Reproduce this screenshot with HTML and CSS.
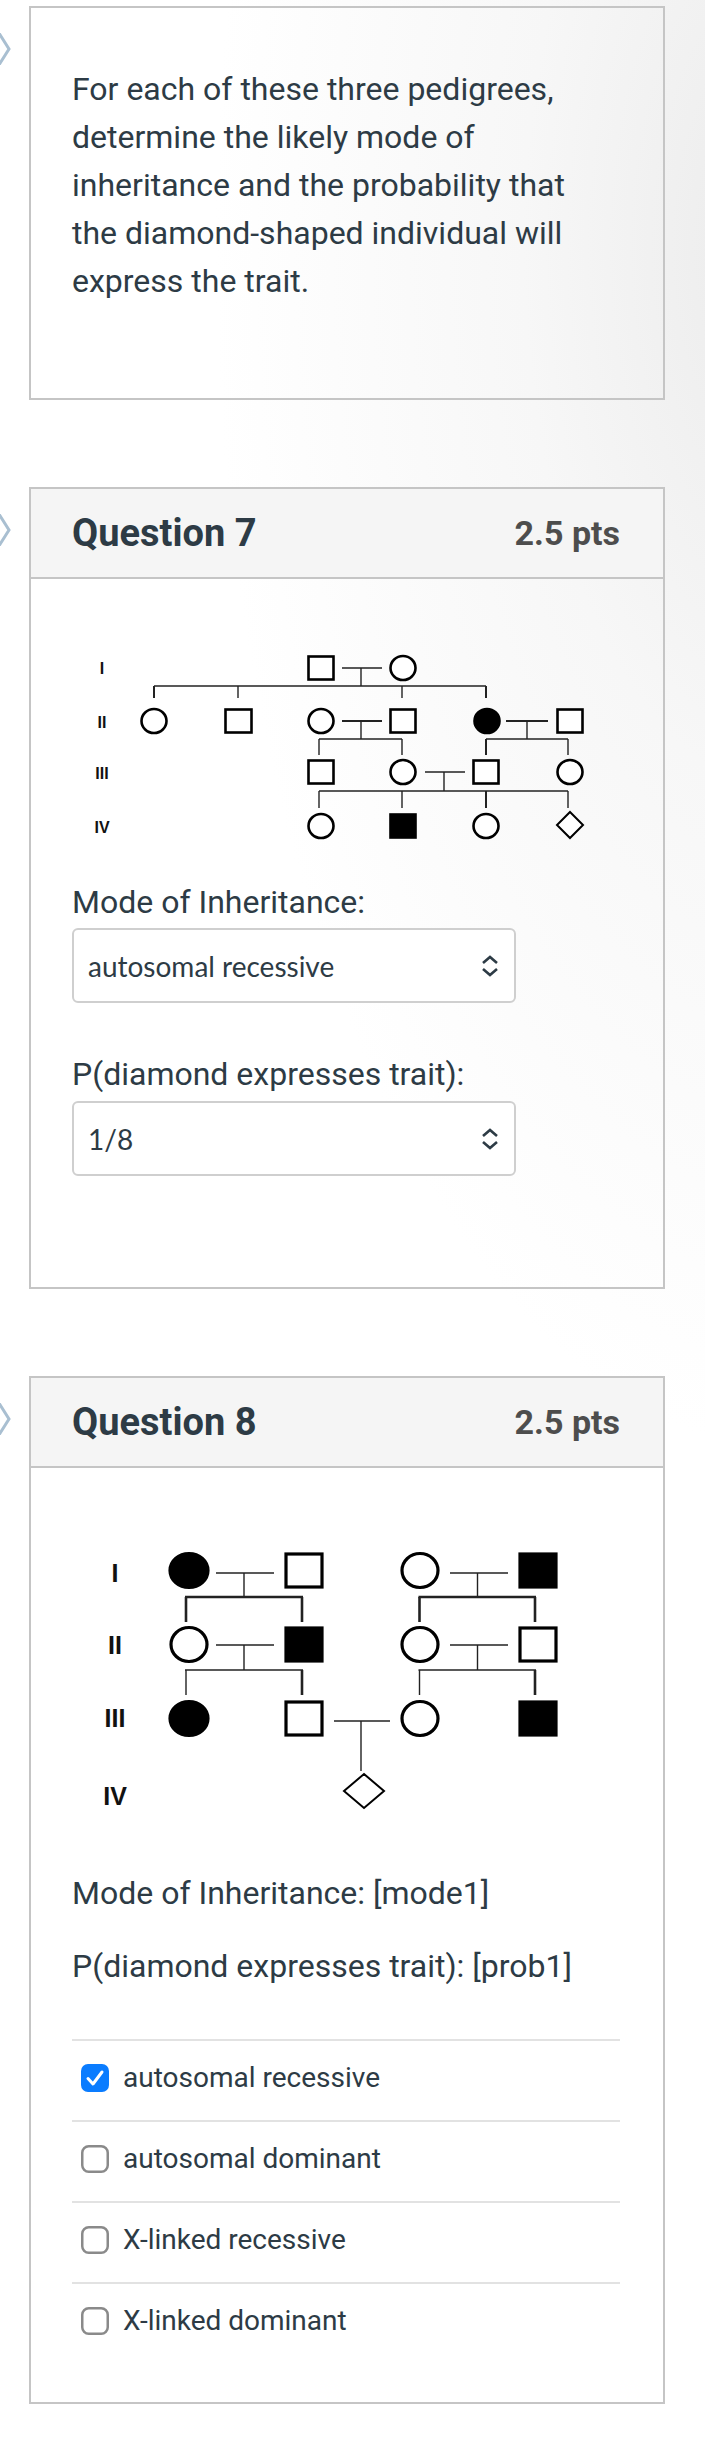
FILE: index.html
```html
<!DOCTYPE html>
<html lang="en">
<head>
    <meta charset="UTF-8">
    <meta name="viewport" content="width=device-width, initial-scale=1.0">
    <title>Quiz - Pedigrees</title>
    <link rel="stylesheet" href="styles.css">
</head>
<body>

<div class="question-row">
    <svg class="nav-arrow" viewBox="0 0 29 32"><polyline points="-3,-3 9,16 -3,35"/></svg>
    <div class="question">
        <div class="intro-text">
            For each of these three pedigrees, determine the likely mode of inheritance and the probability that the diamond-shaped individual will express the trait.
        </div>
    </div>
</div>

<div class="question-row">
    <svg class="nav-arrow" viewBox="0 0 29 32"><polyline points="-3,-3 9,16 -3,35"/></svg>
    <div class="question">
        <div class="question-header">
            <h2 class="question-title">Question 7</h2>
            <span class="question-points">2.5 pts</span>
        </div>
        <div class="question-body q7-body">
            <svg class="pedigree" width="548" height="200" viewBox="72 640 548 200">
                <g class="gen-label">
                    <text x="102" y="674">I</text>
                    <text x="102" y="728">II</text>
                    <text x="102" y="779">III</text>
                    <text x="102" y="833">IV</text>
                </g>
                <g class="line">
                    <!-- generation I -->
                    <line x1="342" y1="668" x2="382" y2="668"/>
                    <line x1="361" y1="668" x2="361" y2="686"/>
                    <line x1="154" y1="686" x2="486" y2="686"/>
                    <line class="thick" x1="154" y1="686" x2="154" y2="698"/>
                    <line x1="238" y1="686" x2="238" y2="698"/>
                    <line x1="402" y1="686" x2="402" y2="698"/>
                    <line class="thick" x1="486" y1="686" x2="486" y2="698"/>
                    <!-- generation II -->
                    <line class="thick" x1="342" y1="721" x2="382" y2="721"/>
                    <line x1="361" y1="721" x2="361" y2="739"/>
                    <line x1="319" y1="739" x2="402" y2="739"/>
                    <line x1="319" y1="739" x2="319" y2="755"/>
                    <line x1="402" y1="739" x2="402" y2="755"/>
                    <line class="thick" x1="506" y1="721" x2="548" y2="721"/>
                    <line x1="527" y1="721" x2="527" y2="739"/>
                    <line x1="486" y1="739" x2="568" y2="739"/>
                    <line class="thick" x1="486" y1="739" x2="486" y2="755"/>
                    <line x1="568" y1="739" x2="568" y2="755"/>
                    <!-- generation III -->
                    <line x1="425" y1="772" x2="465" y2="772"/>
                    <line x1="444" y1="772" x2="444" y2="791"/>
                    <line x1="319" y1="791" x2="568" y2="791"/>
                    <line x1="319" y1="791" x2="319" y2="808"/>
                    <line x1="402" y1="791" x2="402" y2="808"/>
                    <line class="thick" x1="486" y1="791" x2="486" y2="808"/>
                    <line x1="568" y1="791" x2="568" y2="808"/>
                </g>
                <g class="person">
                    <rect x="308.5" y="656.5" width="25" height="23"/>
                    <ellipse cx="403" cy="668" rx="12.5" ry="12"/>

                    <ellipse cx="154" cy="721" rx="12.5" ry="12"/>
                    <rect x="225.5" y="709.5" width="26" height="23"/>
                    <ellipse cx="321" cy="721" rx="12.5" ry="12"/>
                    <rect x="390.5" y="709.5" width="25" height="23"/>
                    <ellipse class="affected" cx="487" cy="721" rx="12.5" ry="12"/>
                    <rect x="557.5" y="709.5" width="25" height="23"/>

                    <rect x="308.5" y="760.5" width="25" height="23"/>
                    <ellipse cx="403" cy="772" rx="12.5" ry="12"/>
                    <rect x="473.5" y="760.5" width="25" height="23"/>
                    <ellipse cx="570" cy="772" rx="12.5" ry="12"/>

                    <ellipse cx="321" cy="826" rx="12.5" ry="12"/>
                    <rect class="affected" x="390.5" y="814.5" width="25" height="23"/>
                    <ellipse cx="486" cy="826" rx="12.5" ry="12"/>
                    <polygon class="diamond" points="570,812 583,825 570,838 557,825"/>
                </g>
            </svg>

            <p class="field-label label-first">Mode of Inheritance:</p>
            <div class="select-box">
                <span>autosomal recessive</span>
                <svg class="select-icon" viewBox="0 0 20 22"><polyline points="3,8 10,2 17,8"/><polyline points="3,14 10,20 17,14"/></svg>
            </div>

            <p class="field-label label-second">P(diamond expresses trait):</p>
            <div class="select-box">
                <span>1/8</span>
                <svg class="select-icon" viewBox="0 0 20 22"><polyline points="3,8 10,2 17,8"/><polyline points="3,14 10,20 17,14"/></svg>
            </div>
        </div>
    </div>
</div>

<div class="question-row">
    <svg class="nav-arrow" viewBox="0 0 29 32"><polyline points="-3,-3 9,16 -3,35"/></svg>
    <div class="question">
        <div class="question-header">
            <h2 class="question-title">Question 8</h2>
            <span class="question-points">2.5 pts</span>
        </div>
        <div class="question-body q8-body">
            <svg class="pedigree" width="548" height="300" viewBox="72 1530 548 300">
                <g class="gen-label big">
                    <text x="115" y="1582">I</text>
                    <text x="115" y="1654">II</text>
                    <text x="115" y="1727">III</text>
                    <text x="115" y="1805">IV</text>
                </g>
                <g class="line">
                    <line x1="216" y1="1573" x2="274" y2="1573"/>
                    <line x1="244" y1="1573" x2="244" y2="1597"/>
                    <line class="wide" x1="185" y1="1597" x2="303" y2="1597"/>
                    <line class="wide" x1="186" y1="1597" x2="186" y2="1622"/>
                    <line class="wide" x1="302" y1="1597" x2="302" y2="1622"/>

                    <line x1="450" y1="1573" x2="508" y2="1573"/>
                    <line x1="477.5" y1="1573" x2="477.5" y2="1597"/>
                    <line class="wide" x1="418.5" y1="1597" x2="536" y2="1597"/>
                    <line class="wide" x1="419.5" y1="1597" x2="419.5" y2="1622"/>
                    <line class="wide" x1="535" y1="1597" x2="535" y2="1622"/>

                    <line x1="216" y1="1645" x2="274" y2="1645"/>
                    <line x1="244" y1="1645" x2="244" y2="1670"/>
                    <line x1="185" y1="1670" x2="303" y2="1670"/>
                    <line x1="186" y1="1670" x2="186" y2="1695"/>
                    <line class="wide" x1="302" y1="1670" x2="302" y2="1695"/>

                    <line x1="450" y1="1645" x2="508" y2="1645"/>
                    <line x1="477.5" y1="1645" x2="477.5" y2="1670"/>
                    <line x1="418.5" y1="1670" x2="536" y2="1670"/>
                    <line x1="419.5" y1="1670" x2="419.5" y2="1695"/>
                    <line class="wide" x1="535" y1="1670" x2="535" y2="1695"/>

                    <line x1="334" y1="1721" x2="390" y2="1721"/>
                    <line x1="361" y1="1721" x2="361" y2="1771"/>
                </g>
                <g class="person heavy">
                    <ellipse class="affected" cx="189" cy="1570.5" rx="19" ry="17"/>
                    <rect x="286" y="1554" width="36" height="33"/>
                    <ellipse cx="420" cy="1570.5" rx="18" ry="17"/>
                    <rect class="affected" x="520" y="1554" width="36" height="33"/>

                    <ellipse cx="189" cy="1644.5" rx="18" ry="17"/>
                    <rect class="affected" x="286" y="1628" width="36" height="33"/>
                    <ellipse cx="420" cy="1644.5" rx="18" ry="17"/>
                    <rect x="520" y="1628" width="36" height="33"/>

                    <ellipse class="affected" cx="189" cy="1718.5" rx="19" ry="17"/>
                    <rect x="286" y="1702" width="36" height="33"/>
                    <ellipse cx="420" cy="1718.5" rx="18" ry="17"/>
                    <rect class="affected" x="520" y="1702" width="36" height="33"/>

                    <polygon class="diamond" points="364,1774 384,1791 364,1808 344,1791"/>
                </g>
            </svg>

            <p class="field-label label-first">Mode of Inheritance: [mode1]</p>
            <p class="field-label label-between">P(diamond expresses trait): [prob1]</p>

            <ul class="answer-list">
                <li class="answer">
                    <svg class="check" viewBox="0 0 28 28"><rect class="box checked" x="0" y="0" width="28" height="28" rx="7"/><polyline class="tick" points="7,14.5 12,20 21,8"/></svg>
                    <span>autosomal recessive</span>
                </li>
                <li class="answer">
                    <svg class="check" viewBox="0 0 28 28"><rect class="box" x="1.25" y="1.25" width="25.5" height="25.5" rx="6.5"/></svg>
                    <span>autosomal dominant</span>
                </li>
                <li class="answer">
                    <svg class="check" viewBox="0 0 28 28"><rect class="box" x="1.25" y="1.25" width="25.5" height="25.5" rx="6.5"/></svg>
                    <span>X-linked recessive</span>
                </li>
                <li class="answer">
                    <svg class="check" viewBox="0 0 28 28"><rect class="box" x="1.25" y="1.25" width="25.5" height="25.5" rx="6.5"/></svg>
                    <span>X-linked dominant</span>
                </li>
            </ul>
        </div>
    </div>
</div>

</body>
</html>
```

FILE: styles.css
```css
body {
    margin: 0;
    padding: 6px 0 49px;
    font-family: Roboto, "Noto Sans", sans-serif;
    color: #2d3b45;
    background: radial-gradient(ellipse 560px 1200px at 110% 10%, #ebebeb 0%, #f7f7f7 45%, #ffffff 100%);
    background-color: #fff;
    min-height: 2399px;
}
.question-row {
    display: flex;
    align-items: flex-start;
    margin-bottom: 87px;
}
.question-row:last-child {
    margin-bottom: 0;
}
.nav-arrow {
    flex: none;
    width: 29px;
    height: 32px;
    margin-top: 27px;
    overflow: hidden;
}
.nav-arrow polyline {
    fill: none;
    stroke: #a9bfd1;
    stroke-width: 3;
}
.question {
    width: 632px;
    border: 2px solid #c5c5c5;
}
.intro-text {
    padding: 57px 60px 93px 41px;
    font-size: 32px;
    line-height: 48px;
}
.question-header {
    display: flex;
    justify-content: space-between;
    align-items: center;
    height: 88px;
    padding: 0 43px 0 41px;
    background-color: #f5f5f5;
    border-bottom: 2px solid #c5c5c5;
}
.question-title {
    margin: 0;
    font-size: 38px;
    font-weight: 700;
    color: #2d3b45;
}
.question-points {
    font-size: 34px;
    font-weight: 700;
    color: #4d4d4d;
}
.question-body {
    padding: 61px 43px 111px 41px;
}
.q8-body {
    padding-top: 62px;
    padding-bottom: 39px;
}
.pedigree {
    display: block;
}
.gen-label text {
    font-family: "Liberation Sans", Arial, sans-serif;
    font-weight: 700;
    font-size: 16px;
    text-anchor: middle;
    fill: #111;
}
.gen-label.big text {
    font-size: 25px;
}
.line line {
    stroke: #222;
    stroke-width: 1.4;
}
.line line.thick {
    stroke-width: 2;
}
.line line.wide {
    stroke-width: 2.6;
}
.person rect,
.person ellipse,
.person polygon {
    fill: #fff;
    stroke: #000;
    stroke-width: 2.6;
}
.person.heavy rect,
.person.heavy ellipse {
    stroke-width: 3.2;
}
.person .affected {
    fill: #000;
}
.person polygon.diamond {
    stroke-width: 2;
}
.field-label {
    margin: 0;
    font-size: 32px;
    line-height: 48px;
}
.q7-body .label-first {
    margin-top: 38px;
}
.q7-body .label-second {
    margin-top: 47px;
}
.q8-body .label-first {
    margin-top: 39px;
}
.q8-body .label-between {
    margin-top: 25px;
}
.select-box {
    display: flex;
    justify-content: space-between;
    align-items: center;
    box-sizing: border-box;
    width: 444px;
    height: 75px;
    margin-top: 2px;
    padding: 0 14px 0 14px;
    border: 2px solid #cfcfcf;
    border-radius: 6px;
    background-color: #fff;
    font-family: Lato, "Noto Sans", sans-serif;
    font-size: 28px;
}
.label-second + .select-box {
    margin-top: 3px;
}
.select-icon {
    width: 20px;
    height: 22px;
}
.select-icon polyline {
    fill: none;
    stroke: #2d3b45;
    stroke-width: 2.6;
}
.answer-list {
    list-style: none;
    margin: 49px 0 0;
    padding: 0;
}
.answer {
    display: flex;
    align-items: center;
    gap: 14px;
    height: 79px;
    padding-left: 9px;
    border-top: 2px solid #e2e2e2;
    font-size: 28px;
}
.check {
    flex: none;
    width: 28px;
    height: 28px;
    margin-top: -6px;
}
.check .box {
    fill: #fff;
    stroke: #8a8a8a;
    stroke-width: 2.5;
}
.check .box.checked {
    fill: #0a7cff;
    stroke: none;
}
.check .tick {
    fill: none;
    stroke: #fff;
    stroke-width: 3;
    stroke-linecap: round;
    stroke-linejoin: round;
}
.answer span {
    margin-top: -6px;
}
```
